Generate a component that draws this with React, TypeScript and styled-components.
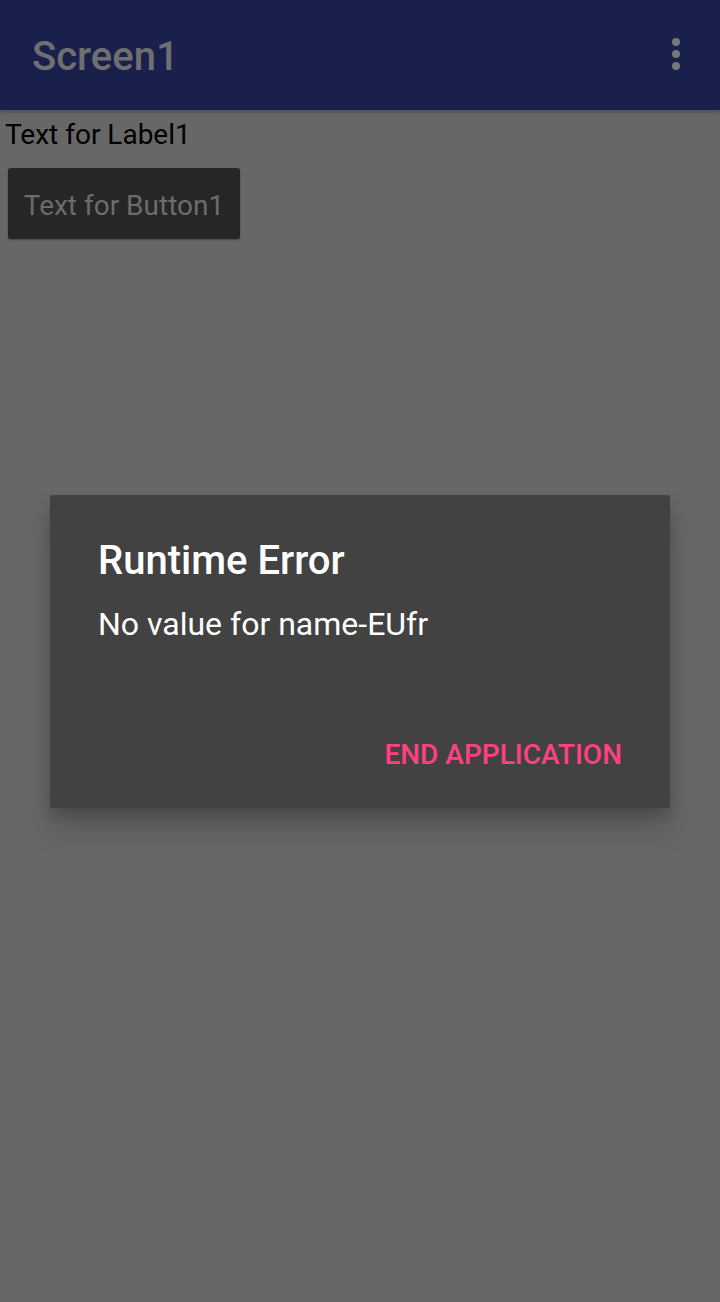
import styled, { createGlobalStyle } from 'styled-components';

const GlobalStyle = createGlobalStyle`
  html, body {
    margin: 0;
    padding: 0;
    background: #676767;
  }
  body {
    font-family: Roboto, "Liberation Sans", sans-serif;
  }
`;

const App = () => {
  return (
    <Screen>
      <GlobalStyle />
      <AppBar>
        <Title>Screen1</Title>
        <MenuButton aria-label="More options">
          <Dot />
          <Dot />
          <Dot />
        </MenuButton>
      </AppBar>
      <Content>
        <Label>Text for Label1</Label>
        <Button>Text for Button1</Button>
      </Content>
      <Overlay>
        <Dialog>
          <DialogTitle>Runtime Error</DialogTitle>
          <DialogMessage>No value for name-EUfr</DialogMessage>
          <Actions>
            <ActionButton>END APPLICATION</ActionButton>
          </Actions>
        </Dialog>
      </Overlay>
    </Screen>
  );
};

const Screen = styled.div`
  position: relative;
  width: 720px;
  height: 1302px;
  overflow: hidden;
  background: #676767;
`;

const AppBar = styled.header`
  height: 110px;
  background: #19204b;
  display: flex;
  align-items: center;
  justify-content: space-between;
  padding: 0 40px 0 32px;
  box-sizing: border-box;
  box-shadow: 0 2px 4px rgba(0, 0, 0, 0.25);
`;

const Title = styled.h1`
  margin: 3px 0 0 0;
  font-size: 40px;
  font-weight: 500;
  color: #6f6f6f;
  line-height: 1;
`;

const MenuButton = styled.div`
  display: flex;
  flex-direction: column;
  gap: 4px;
  margin-top: -2px;
`;

const Dot = styled.span`
  width: 8px;
  height: 8px;
  border-radius: 50%;
  background: #777777;
`;

const Content = styled.main`
  display: flex;
  flex-direction: column;
  align-items: flex-start;
  padding: 9px 0 0 5px;
`;

const Label = styled.div`
  font-size: 28px;
  line-height: 32px;
  color: #000;
`;

const Button = styled.button`
  margin: 17px 0 0 3px;
  width: 232px;
  height: 71px;
  border: none;
  border-radius: 3px;
  background: #262626;
  color: #6c6c6c;
  font-family: Roboto, "Liberation Sans", sans-serif;
  font-size: 28px;
  padding: 3px 0 0 0;
  box-shadow: 0 1px 2px rgba(0, 0, 0, 0.3);
`;

const Overlay = styled.div`
  position: absolute;
  inset: 0;
  display: flex;
  align-items: center;
  justify-content: center;
`;

const Dialog = styled.div`
  width: 620px;
  height: 313px;
  box-sizing: border-box;
  background: #424242;
  border-radius: 3px;
  padding: 43px 48px 0 48px;
  display: flex;
  flex-direction: column;
  box-shadow: 0 20px 30px rgba(0, 0, 0, 0.18), 0 8px 12px rgba(0, 0, 0, 0.12);
`;

const DialogTitle = styled.h2`
  margin: 0;
  font-size: 40px;
  font-weight: 500;
  line-height: 46px;
  color: #ffffff;
`;

const DialogMessage = styled.p`
  margin: 20px 0 0 0;
  font-size: 32px;
  line-height: 40px;
  color: #ffffff;
`;

const Actions = styled.div`
  display: flex;
  justify-content: flex-end;
  margin-top: auto;
  padding-bottom: 37px;
`;

const ActionButton = styled.span`
  font-size: 28px;
  font-weight: 500;
  color: #ff4081;
  line-height: 32px;
`;

export default App;
